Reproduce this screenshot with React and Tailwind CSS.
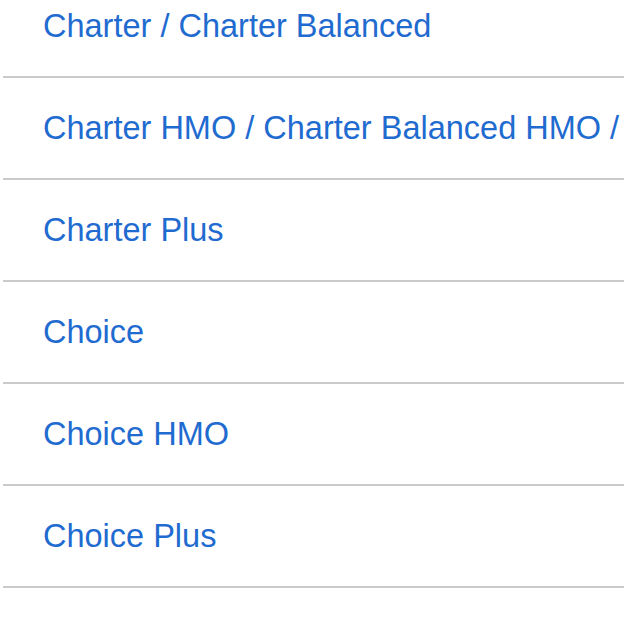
import React from 'react';

const plans = [
  'Charter / Charter Balanced',
  'Charter HMO / Charter Balanced HMO /',
  'Charter Plus',
  'Choice',
  'Choice HMO',
  'Choice Plus',
];

export default function App() {
  return (
    <div className="h-[619px] w-[624px] overflow-hidden bg-white" style={{ fontFamily: '"Liberation Sans", Arial, sans-serif' }}>
      <ul className="-mt-[24px] ml-[3px]">
        {plans.map((plan, index) => (
          <li key={index} className="flex h-[102px] items-center border-b-2 border-[#cbcbcb] pl-[40px]">
            <a href="#" className="whitespace-nowrap text-[32.5px] leading-[38px] text-[#1f6bd0]">
              {plan}
            </a>
          </li>
        ))}
      </ul>
    </div>
  );
}
